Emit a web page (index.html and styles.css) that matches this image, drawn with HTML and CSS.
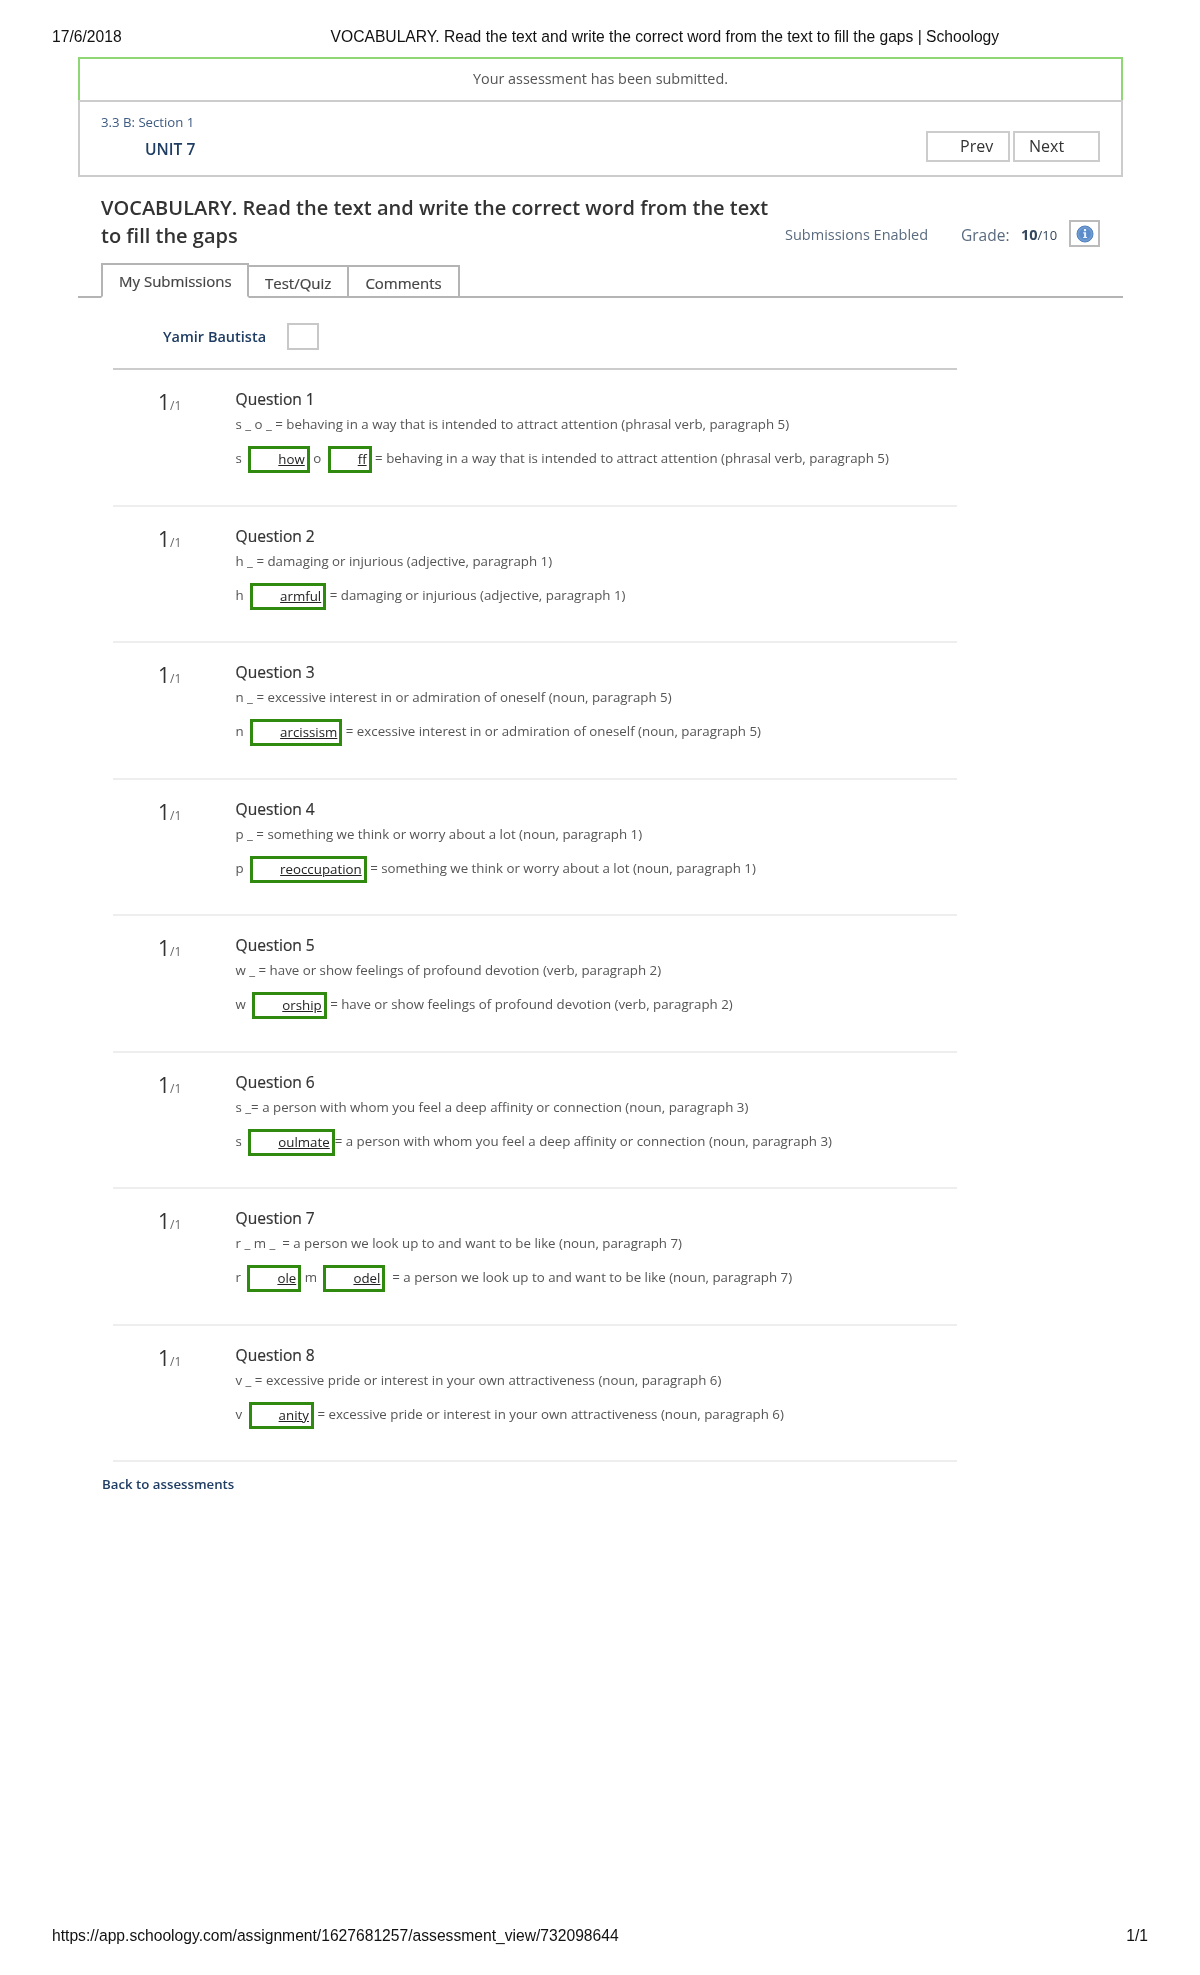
FILE: index.html
```html
<!DOCTYPE html>
<html lang="en">
<head>
    <meta charset="UTF-8">
    <title>VOCABULARY. Read the text and write the correct word from the text to fill the gaps | Schoology</title>
    <link rel="stylesheet" href="styles.css">
</head>
<body>
<div class="sheet">
    <div class="print-head">
        <span>17/6/2018</span>
        <span class="print-title">VOCABULARY. Read the text and write the correct word from the text to fill the gaps | Schoology</span>
    </div>

    <div class="content">
        <div class="message">Your assessment has been submitted.</div>
        <div class="crumbs">
            <div>
                <a class="section-link">3.3 B: Section 1</a>
                <a class="unit-link">UNIT 7</a>
            </div>
            <div class="pager">
                <a class="btn btn-prev">Prev</a>
                <a class="btn btn-next">Next</a>
            </div>
        </div>

        <div class="title-row">
            <h1>VOCABULARY. Read the text and write the correct word from the text to fill the gaps</h1>
            <div class="grade-info">
                <span class="enabled">Submissions Enabled</span>
                <span class="grade-label">Grade:</span>
                <span class="grade-value"><b>10</b><small>/10</small></span>
                <span class="info-btn">
                    <svg width="18" height="18" viewBox="0 0 18 18">
                        <circle cx="9" cy="9" r="8" fill="#6f9bd1" stroke="#4f80bd" stroke-width="1"/>
                        <circle cx="9" cy="9" r="5.8" fill="#5b8cc9"/>
                        <rect x="7.9" y="4" width="2.2" height="2.2" fill="#e8f0fa"/>
                        <path d="M7.2 7.3h2.9v4.6h1v1.2H7.1v-1.2h1V8.5h-.9z" fill="#e8f0fa"/>
                    </svg>
                </span>
            </div>
        </div>

        <div class="tabs">
            <a class="tab active">My Submissions</a>
            <a class="tab">Test/Quiz</a>
            <a class="tab">Comments</a>
        </div>

        <div class="student">
            <span class="student-name">Yamir Bautista</span>
            <span class="student-box"></span>
        </div>

        <div class="questions">
            <div class="question">
                <div class="score">1<small>/1</small></div>
                <div class="question-body">
                    <h3>Question 1</h3>
                    <p class="prompt">s _ o _ = behaving in a way that is intended to attract attention (phrasal verb, paragraph 5)</p>
                    <p class="answer">s <span class="fill"><u>how</u></span> o <span class="fill"><u>ff</u></span> = behaving in a way that is intended to attract attention (phrasal verb, paragraph 5)</p>
                </div>
            </div>
            <div class="question">
                <div class="score">1<small>/1</small></div>
                <div class="question-body">
                    <h3>Question 2</h3>
                    <p class="prompt">h _ = damaging or injurious (adjective, paragraph 1)</p>
                    <p class="answer">h <span class="fill"><u>armful</u></span> = damaging or injurious (adjective, paragraph 1)</p>
                </div>
            </div>
            <div class="question">
                <div class="score">1<small>/1</small></div>
                <div class="question-body">
                    <h3>Question 3</h3>
                    <p class="prompt">n _ = excessive interest in or admiration of oneself (noun, paragraph 5)</p>
                    <p class="answer">n <span class="fill"><u>arcissism</u></span> = excessive interest in or admiration of oneself (noun, paragraph 5)</p>
                </div>
            </div>
            <div class="question">
                <div class="score">1<small>/1</small></div>
                <div class="question-body">
                    <h3>Question 4</h3>
                    <p class="prompt">p _ = something we think or worry about a lot (noun, paragraph 1)</p>
                    <p class="answer">p <span class="fill"><u>reoccupation</u></span> = something we think or worry about a lot (noun, paragraph 1)</p>
                </div>
            </div>
            <div class="question">
                <div class="score">1<small>/1</small></div>
                <div class="question-body">
                    <h3>Question 5</h3>
                    <p class="prompt">w _ = have or show feelings of profound devotion (verb, paragraph 2)</p>
                    <p class="answer">w <span class="fill"><u>orship</u></span> = have or show feelings of profound devotion (verb, paragraph 2)</p>
                </div>
            </div>
            <div class="question">
                <div class="score">1<small>/1</small></div>
                <div class="question-body">
                    <h3>Question 6</h3>
                    <p class="prompt">s _= a person with whom you feel a deep affinity or connection (noun, paragraph 3)</p>
                    <p class="answer">s <span class="fill"><u>oulmate</u></span>= a person with whom you feel a deep affinity or connection (noun, paragraph 3)</p>
                </div>
            </div>
            <div class="question">
                <div class="score">1<small>/1</small></div>
                <div class="question-body">
                    <h3>Question 7</h3>
                    <p class="prompt">r _ m _ &nbsp;= a person we look up to and want to be like (noun, paragraph 7)</p>
                    <p class="answer">r <span class="fill"><u>ole</u></span> m <span class="fill"><u>odel</u></span> &nbsp;= a person we look up to and want to be like (noun, paragraph 7)</p>
                </div>
            </div>
            <div class="question">
                <div class="score">1<small>/1</small></div>
                <div class="question-body">
                    <h3>Question 8</h3>
                    <p class="prompt">v _ = excessive pride or interest in your own attractiveness (noun, paragraph 6)</p>
                    <p class="answer">v <span class="fill"><u>anity</u></span> = excessive pride or interest in your own attractiveness (noun, paragraph 6)</p>
                </div>
            </div>
        </div>

        <a class="back-link">Back to assessments</a>
    </div>

    <div class="print-foot">
        <span>https://app.schoology.com/assignment/1627681257/assessment_view/732098644</span>
        <span>1/1</span>
    </div>
</div>
</body>
</html>
```

FILE: styles.css
```css
* {
    box-sizing: border-box;
}
body {
    margin: 0;
    font-family: "Open Sans", sans-serif;
    color: #333;
    background-color: #fff;
}
.sheet {
    height: 1975px;
    display: flex;
    flex-direction: column;
    padding: 28px 52px 30px 52px;
    filter: blur(0.35px);
}
.print-head, .print-foot {
    font-family: "Liberation Sans", Arial, sans-serif;
    font-size: 15.65px;
    line-height: 18px;
    color: #111;
    display: flex;
}
.print-title {
    margin-left: 209px;
}
.print-foot {
    justify-content: space-between;
    margin-top: auto;
}

.content {
    width: 1045px;
    margin-left: 26px;
    margin-top: 11px;
}
.message {
    height: 43px;
    border: 2px solid #8fd675;
    border-bottom: none;
    text-align: center;
    font-size: 14.4px;
    line-height: 39px;
    color: #555;
}
.crumbs {
    height: 77px;
    border: 2px solid #ccc;
    display: flex;
    justify-content: space-between;
    padding: 10px 21px 0 21px;
}
.section-link {
    display: block;
    font-size: 13.2px;
    line-height: 20px;
    color: #3d5a80;
}
.unit-link {
    display: block;
    margin: 7px 0 0 44px;
    font-size: 15.6px;
    font-weight: 600;
    line-height: 20px;
    color: #1f3d63;
}
.pager {
    display: flex;
    gap: 3px;
    padding-top: 19px;
}
.btn {
    height: 31px;
    border: 2px solid #ccc;
    font-size: 16px;
    line-height: 26px;
    color: #333;
}
.btn-prev {
    width: 84px;
    padding-left: 32px;
}
.btn-next {
    width: 87px;
    padding-left: 14px;
}

.title-row {
    display: flex;
    justify-content: space-between;
    padding: 17px 23px 0 23px;
    height: 84px;
}
h1 {
    width: 680px;
    margin: 0;
    font-size: 20px;
    font-weight: 600;
    line-height: 27.8px;
    color: #333;
}
.grade-info {
    display: flex;
    align-items: flex-start;
    padding-top: 26px;
    font-size: 14.5px;
    line-height: 20px;
    color: #5a6b7f;
}
.enabled {
    margin-top: 5px;
    width: 176px;
}
.grade-label {
    margin-top: 5px;
    width: 60px;
    font-size: 15.5px;
}
.grade-value {
    margin-top: 5px;
    width: 48px;
    color: #33475f;
}
.grade-value small {
    font-size: 13px;
}
.info-btn {
    display: flex;
    align-items: center;
    justify-content: center;
    width: 31px;
    height: 27px;
    border: 2px solid #bbb;
}

.tabs {
    display: flex;
    align-items: flex-end;
    height: 37px;
    padding-left: 23px;
    border-bottom: 2px solid #b4b4b4;
}
.tab {
    height: 33px;
    margin-bottom: -2px;
    border: 2px solid #b4b4b4;
    border-left: none;
    padding: 0 16px;
    font-size: 15px;
    line-height: 32px;
    color: #444;
    -webkit-text-stroke: 0.2px #444;
    white-space: nowrap;
}
.tab.active {
    height: 35px;
    width: 148px;
    border-left: 2px solid #b4b4b4;
    border-bottom-color: #fff;
    line-height: 33px;
}

.student {
    display: flex;
    align-items: center;
    height: 27px;
    margin: 25px 0 0 85px;
}
.student-name {
    width: 124px;
    font-size: 14.5px;
    font-weight: 600;
    color: #1f3d63;
}
.student-box {
    width: 32px;
    height: 27px;
    border: 2px solid #c8c8c8;
}
.questions {
    width: 844px;
    margin: 18px 0 0 35px;
    border-top: 2px solid #ccc;
}
.question {
    display: flex;
    height: 136.5px;
    border-bottom: 2px solid #eee;
}
.score {
    width: 122.5px;
    padding: 17px 0 0 45px;
    font-size: 21px;
    line-height: 30px;
    color: #333;
}
.score small {
    font-size: 12px;
    color: #666;
}
.question-body {
    flex: 1;
    padding-top: 19px;
}
h3 {
    margin: 0;
    font-size: 15.6px;
    font-weight: 400;
    line-height: 20px;
    color: #333;
    -webkit-text-stroke: 0.2px #333;
}
.prompt, .answer {
    margin: 0;
    font-size: 13.3px;
    line-height: 20px;
    color: #555;
    white-space: nowrap;
}
.prompt {
    margin-top: 5px;
}
.answer {
    margin-top: 12px;
}
.fill {
    display: inline-block;
    height: 27px;
    margin-left: 3px;
    border: 3px solid #2f8a0f;
    padding: 0 2px 0 27px;
    line-height: 21px;
    color: #222;
    vertical-align: middle;
}
.back-link {
    display: block;
    margin: 11.5px 0 0 24px;
    font-size: 13.25px;
    font-weight: 600;
    line-height: 20px;
    color: #1f3d63;
}
```
